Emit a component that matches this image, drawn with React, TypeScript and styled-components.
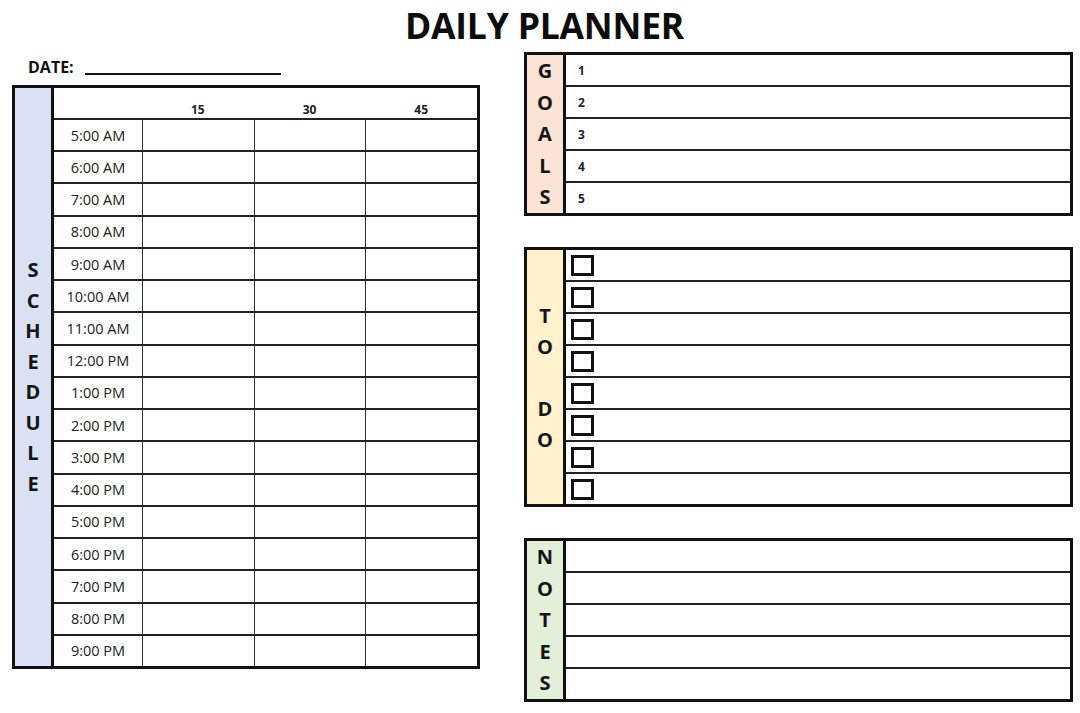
import styled, { createGlobalStyle } from 'styled-components';

const GlobalStyle = createGlobalStyle`
	* {
		box-sizing: border-box;
	}
	body {
		margin: 0;
		background: #ffffff;
		font-family: 'Open Sans', 'Liberation Sans', sans-serif;
		color: #111111;
	}
`;

const Page = styled.div`
	width: 1080px;
	height: 713px;
	padding: 0 7px 0 12px;
	display: flex;
	flex-direction: column;
	overflow: hidden;
`;
const Title = styled.h1`
	margin: 0;
	height: 52px;
	display: flex;
	align-items: center;
	justify-content: center;
	padding-left: 4px;
	font-size: 35.5px;
	line-height: 1;
	font-weight: 700;
	letter-spacing: -0.2px;
	color: #0d0d0d;
`;
const Columns = styled.div`
	display: flex;
	gap: 44px;
	align-items: flex-start;
`;
const LeftColumn = styled.div`
	width: 468px;
	display: flex;
	flex-direction: column;
`;
const RightColumn = styled.div`
	width: 549px;
	display: flex;
	flex-direction: column;
	gap: 31px;
`;
const DateRow = styled.div`
	height: 33px;
	padding: 5px 0 0 16px;
	font-size: 16px;
	line-height: 20px;
	font-weight: 700;
`;
const DateLine = styled.span`
	display: inline-block;
	width: 196px;
	height: 2px;
	margin-left: 11px;
	background: #111111;
	vertical-align: -2px;
`;
const Panel = styled.div<{ $height: number }>`
	height: ${(p) => p.$height}px;
	border: 3px solid #111111;
	display: flex;
`;
const Sidebar = styled.div<{ $bg: string; $line: number }>`
	width: 39px;
	flex-shrink: 0;
	background: ${(p) => p.$bg};
	border-right: 3px solid #111111;
	display: flex;
	flex-direction: column;
	align-items: center;
	justify-content: center;
	font-size: 20px;
	font-weight: 700;
	line-height: ${(p) => p.$line}px;
	color: #151515;
`;
const Letter = styled.span`
	display: block;
	min-height: ${(p) => '1em'};
`;
const Body = styled.div`
	flex: 1;
	display: flex;
	flex-direction: column;
`;
const HeaderRow = styled.div`
	height: 30px;
	flex-shrink: 0;
	display: grid;
	grid-template-columns: 88px 1fr 1fr 1fr;
	align-items: end;
	padding-bottom: 1px;
`;
const HeaderLabel = styled.span`
	text-align: center;
	font-size: 12px;
	line-height: 14px;
	font-weight: 700;
	color: #222222;
`;
const Row = styled.div`
	flex: 1;
	display: flex;
	align-items: center;
	&:not(:first-child) {
		border-top: 2px solid #222222;
	}
`;
const TimeRow = styled(Row)`
	display: grid;
	grid-template-columns: 88px 1fr 1fr 1fr;
	align-items: stretch;
`;
const TimeLabel = styled.span`
	display: flex;
	align-items: center;
	justify-content: center;
	font-size: 14.5px;
	color: #222222;
`;
const Slot = styled.span`
	border-left: 1.5px solid #333333;
`;
const Number = styled.span`
	padding-left: 12px;
	font-size: 12px;
	font-weight: 700;
	color: #222222;
`;
const CheckBox = styled.span`
	width: 23px;
	height: 21px;
	margin-left: 5px;
	border: 3px solid #111111;
`;

const times = [
	'5:00 AM',
	'6:00 AM',
	'7:00 AM',
	'8:00 AM',
	'9:00 AM',
	'10:00 AM',
	'11:00 AM',
	'12:00 PM',
	'1:00 PM',
	'2:00 PM',
	'3:00 PM',
	'4:00 PM',
	'5:00 PM',
	'6:00 PM',
	'7:00 PM',
	'8:00 PM',
	'9:00 PM',
];

const Letters = ({ word }: { word: string }) => (
	<>
		{word.split('').map((ch, i) => (
			<Letter key={i}>{ch === ' ' ? '\u00a0' : ch}</Letter>
		))}
	</>
);

const App = () => {
	return (
		<Page>
			<GlobalStyle />
			<Title>DAILY PLANNER</Title>
			<Columns>
				<LeftColumn>
					<DateRow>
						DATE:
						<DateLine />
					</DateRow>
					<Panel $height={584}>
						<Sidebar $bg='#d9e1f2' $line={30.5}>
							<Letters word='SCHEDULE' />
						</Sidebar>
						<Body>
							<HeaderRow>
								<span />
								<HeaderLabel>15</HeaderLabel>
								<HeaderLabel>30</HeaderLabel>
								<HeaderLabel>45</HeaderLabel>
							</HeaderRow>
							{times.map((t) => (
								<TimeRow key={t}>
									<TimeLabel>{t}</TimeLabel>
									<Slot />
									<Slot />
									<Slot />
								</TimeRow>
							))}
						</Body>
					</Panel>
				</LeftColumn>
				<RightColumn>
					<Panel $height={164}>
						<Sidebar $bg='#fbe4d5' $line={32}>
							<Letters word='GOALS' />
						</Sidebar>
						<Body>
							{[1, 2, 3, 4, 5].map((n) => (
								<Row key={n}>
									<Number>{n}</Number>
								</Row>
							))}
						</Body>
					</Panel>
					<Panel $height={260}>
						<Sidebar $bg='#fff2cc' $line={31}>
							<Letters word='TO DO' />
						</Sidebar>
						<Body>
							{[1, 2, 3, 4, 5, 6, 7, 8].map((n) => (
								<Row key={n}>
									<CheckBox />
								</Row>
							))}
						</Body>
					</Panel>
					<Panel $height={164}>
						<Sidebar $bg='#e2efd9' $line={32}>
							<Letters word='NOTES' />
						</Sidebar>
						<Body>
							{[1, 2, 3, 4, 5].map((n) => (
								<Row key={n} />
							))}
						</Body>
					</Panel>
				</RightColumn>
			</Columns>
		</Page>
	);
};

export default App;
